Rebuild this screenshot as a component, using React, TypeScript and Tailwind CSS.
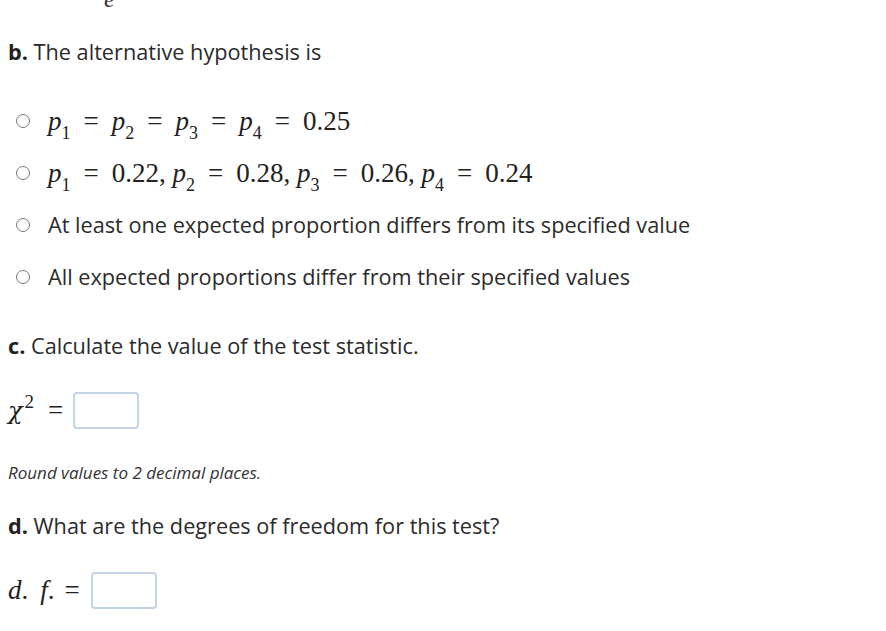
import React from "react";

const sans = { fontFamily: '"Open Sans", "Noto Sans", sans-serif' };

const Radio = () => (
  <span className="inline-block w-[14px] h-[14px] rounded-full border border-[#777] bg-white shrink-0" />
);

const M = ({ children }: { children: React.ReactNode }) => (
  <span className="font-['Liberation_Serif',serif] text-[27px] text-[#222] whitespace-nowrap">{children}</span>
);

const V = ({ n }: { n: string }) => (
  <span>
    <i>p</i>
    <span className="relative top-[9px] text-[18px]">{n}</span>
  </span>
);

const Eq = () => <span className="mx-[13px]">=</span>;

const AnswerBox = () => (
  <span className="inline-block w-[66px] h-[37px] rounded-[4px] border-2 border-[#c5d3e6] bg-white" />
);

export default function App() {
  return (
    <div className="w-[886px] h-[631px] bg-white text-[#2b2b2b] overflow-hidden relative" style={sans}>
      <div className="h-[28px] relative">
        <i className="absolute left-[104px] -top-[19px] font-['Liberation_Serif',serif] text-[24px] text-[#333]">e</i>
      </div>

      <div className="px-[8px] text-[21.7px] leading-[30px] mt-[9px]">
        <b className="font-bold text-[#222]">b.</b> The alternative hypothesis is
      </div>

      <div className="flex flex-col mt-[28px] pl-[16px]">
        <div className="flex items-center gap-[18px] h-[52px]">
          <Radio />
          <M>
            <V n="1" />
            <Eq />
            <V n="2" />
            <Eq />
            <V n="3" />
            <Eq />
            <V n="4" />
            <Eq />0.25
          </M>
        </div>
        <div className="flex items-center gap-[18px] h-[52px]">
          <Radio />
          <M>
            <V n="1" />
            <Eq />0.22, <V n="2" />
            <Eq />0.28, <V n="3" />
            <Eq />0.26, <V n="4" />
            <Eq />0.24
          </M>
        </div>
        <div className="flex items-center gap-[18px] h-[52px] text-[21.7px]">
          <Radio />
          <span>At least one expected proportion differs from its specified value</span>
        </div>
        <div className="flex items-center gap-[18px] h-[52px] text-[21.7px]">
          <Radio />
          <span>All expected proportions differ from their specified values</span>
        </div>
      </div>

      <div className="px-[8px] text-[21.7px] leading-[30px] mt-[28px]">
        <b className="font-bold text-[#222]">c.</b> Calculate the value of the test statistic.
      </div>

      <div className="px-[8px] flex items-center mt-[30px] h-[38px]">
        <M>
          <i className="font-['DejaVu_Serif',serif] text-[24px]">χ</i>
          <span className="relative -top-[11px] ml-[2px] text-[19px]">2</span>
          <span className="ml-[14px] mr-[10px]">=</span>
        </M>
        <AnswerBox />
      </div>

      <div className="px-[8px] text-[17px] italic mt-[32px] leading-[24px] text-[#333]">
        Round values to 2 decimal places.
      </div>

      <div className="px-[8px] text-[21.7px] leading-[30px] mt-[26px]">
        <b className="font-bold text-[#222]">d.</b> What are the degrees of freedom for this test?
      </div>

      <div className="px-[8px] flex items-center mt-[30px] h-[38px]">
        <M>
          <i>d</i>.<span className="ml-[12px]"><i>f</i></span>.<span className="ml-[10px] mr-[11px]">=</span>
        </M>
        <AnswerBox />
      </div>
    </div>
  );
}
